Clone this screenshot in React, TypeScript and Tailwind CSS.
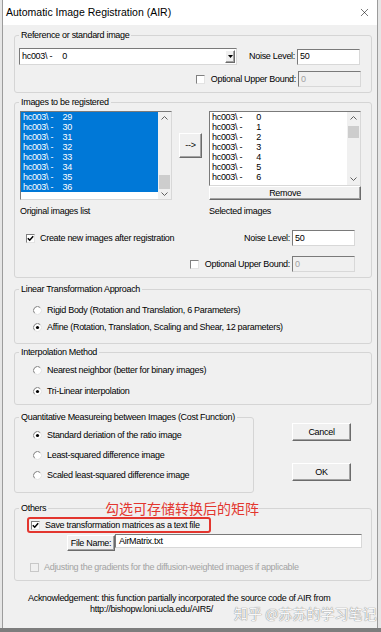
import { X } from 'lucide-react';
import type { ReactNode } from 'react';

const sunken =
  'border border-t-[#7a7a7a] border-l-[#7a7a7a] border-r-[#d8d8d8] border-b-[#d8d8d8]';
const raised =
  'border border-t-white border-l-white border-r-[#6b6b6b] border-b-[#6b6b6b] bg-[#f0f0f0] shadow-[inset_-1px_-1px_0_#a3a3a3]';

const leftItems = [29, 30, 31, 32, 33, 34, 35, 36];
const rightItems = [0, 1, 2, 3, 4, 5, 6];

function Group({
  label,
  className = '',
  children,
}: {
  label: string;
  className?: string;
  children: ReactNode;
}) {
  return (
    <div className={`rounded-[3px] border border-[#d5d5d5] ${className}`}>
      <div className="-mt-[6px] ml-[4px] w-fit bg-[#f0f0f0] px-[2px] leading-[11px]">
        {label}
      </div>
      {children}
    </div>
  );
}

function Item({ n, w = 'w-[49px]' }: { n: number; w?: string }) {
  return (
    <span className={`flex justify-between ${w}`}>
      <span>hc003\ -</span>
      <span>{n}</span>
    </span>
  );
}

function Check({ checked, disabled }: { checked?: boolean; disabled?: boolean }) {
  return (
    <span
      className={`flex h-[9px] w-[9px] shrink-0 items-center justify-center border ${
        disabled
          ? 'border-[#c8c8c8] bg-[#f0f0f0]'
          : 'border-t-[#808080] border-l-[#808080] border-r-[#e3e3e3] border-b-[#e3e3e3] bg-white'
      }`}
    >
      {checked && (
        <svg width="7" height="7" viewBox="0 0 7 7">
          <path d="M0.8 3.2 L2.7 5.2 L6.2 1.2" fill="none" stroke="#000" strokeWidth="1.5" />
        </svg>
      )}
    </span>
  );
}

function Radio({ checked }: { checked?: boolean }) {
  return (
    <svg width="9" height="9" viewBox="0 0 9 9" className="shrink-0">
      <circle cx="4.5" cy="4.5" r="4" fill="#fff" />
      <path d="M1.67 7.33 A4 4 0 0 1 7.33 1.67" stroke="#7f7f7f" fill="none" />
      <path d="M7.33 1.67 A4 4 0 0 1 1.67 7.33" stroke="#e2e2e2" fill="none" />
      {checked && <circle cx="4.5" cy="4.5" r="1.6" fill="#000" />}
    </svg>
  );
}

function RadioRow({
  label,
  checked,
  className = '',
}: {
  label: string;
  checked?: boolean;
  className?: string;
}) {
  return (
    <div className={`flex h-[14px] items-center gap-[5px] pl-[18px] ${className}`}>
      <Radio checked={checked} />
      <span>{label}</span>
    </div>
  );
}

function Chevron({ up }: { up?: boolean }) {
  return (
    <svg width="7" height="4" viewBox="0 0 7 4">
      <path
        d={up ? 'M0.5 3.5 L3.5 0.5 L6.5 3.5' : 'M0.5 0.5 L3.5 3.5 L6.5 0.5'}
        fill="none"
        stroke="#606060"
      />
    </svg>
  );
}

function Field({
  value,
  disabled,
  className = '',
}: {
  value: string;
  disabled?: boolean;
  className?: string;
}) {
  return (
    <div
      className={`flex h-[16px] w-[63px] items-center pl-[2px] ${sunken} ${
        disabled ? 'bg-[#f0f0f0] text-[#a0a0a0]' : 'bg-white'
      } ${className}`}
    >
      {value}
    </div>
  );
}

export default function App() {
  return (
    <div className="relative h-[632px] w-[381px] overflow-hidden bg-[#e6e6e6] font-['Liberation_Sans',Arial,sans-serif] text-[9px] leading-[11px] tracking-[-0.3px] text-black">
      <div className="ml-[2px] flex h-[628px] w-[376px] flex-col border-x border-[#9c9c9c] bg-[#f0f0f0]">
        <div className="flex h-[25px] shrink-0 items-center justify-between bg-white pl-[3px] pr-[6px]">
          <span className="text-[10.5px] tracking-normal">Automatic Image Registration (AIR)</span>
          <X size={13} strokeWidth={1} />
        </div>

        <div className="flex flex-col pl-[11px]">
          <Group label="Reference or standard image" className="mt-[10px] w-[358px] pb-[5px]">
            <div className="mt-[7px] flex h-[17px] items-center pr-[11px]">
              <div
                className={`ml-[4px] flex h-[17px] w-[218px] items-center justify-between bg-white pl-[2px] ${sunken}`}
              >
                <Item n={0} w="w-[45px]" />
                <span
                  className={`mr-[1px] flex h-[13px] w-[10px] items-center justify-center ${raised}`}
                >
                  <svg width="5" height="3" viewBox="0 0 5 3">
                    <path d="M0 0 H5 L2.5 3 Z" fill="#000" />
                  </svg>
                </span>
              </div>
              <span className="ml-auto">Noise Level:</span>
              <Field value="50" className="ml-[2px]" />
            </div>
            <div className="mt-[6px] flex items-center justify-end pr-[10px]">
              <Check />
              <span className="ml-[6px]">Optional Upper Bound:</span>
              <Field value="0" disabled className="ml-[2px]" />
            </div>
          </Group>

          <Group label="Images to be registered" className="mt-[9px] w-[358px] pb-[5px]">
            <div className="ml-[5px] mt-[3px] flex items-start">
              <div className={`flex h-[89px] w-[152px] bg-white ${sunken}`}>
                <div className="flex flex-1 flex-col">
                  {leftItems.map((n) => (
                    <div
                      key={n}
                      className="flex h-[10px] items-center bg-[#0078d7] pl-[2px] text-white"
                    >
                      <Item n={n} />
                    </div>
                  ))}
                </div>
                <div className="flex w-[13px] flex-col bg-[#f0f0f0]">
                  <div className="flex h-[12px] items-center justify-center">
                    <Chevron up />
                  </div>
                  <div className="flex flex-1 flex-col justify-end">
                    <div className="mx-auto h-[14px] w-[11px] bg-[#cdcdcd]" />
                  </div>
                  <div className="flex h-[10px] items-center justify-center">
                    <Chevron />
                  </div>
                </div>
              </div>

              <button className={`ml-[7px] mt-[22px] h-[25px] w-[23px] ${raised}`}>--&gt;</button>

              <div className="ml-[7px] flex w-[152px] flex-col">
                <div className={`flex h-[75px] bg-white ${sunken}`}>
                  <div className="flex flex-1 flex-col pl-[2px]">
                    {rightItems.map((n) => (
                      <div key={n} className="flex h-[10px] items-center">
                        <Item n={n} />
                      </div>
                    ))}
                  </div>
                  <div className="flex w-[13px] flex-col bg-[#f0f0f0]">
                    <div className="flex h-[12px] items-center justify-center">
                      <Chevron up />
                    </div>
                    <div className="flex-1 pt-[2px]">
                      <div className="mx-auto h-[12px] w-[11px] bg-[#cdcdcd]" />
                    </div>
                    <div className="flex h-[12px] items-center justify-center">
                      <Chevron />
                    </div>
                  </div>
                </div>
                <button className={`h-[14px] ${raised}`}>Remove</button>
              </div>
            </div>

            <div className="mt-[5px] flex leading-[12px]">
              <span className="ml-[5px] w-[189px]">Original images list</span>
              <span>Selected images</span>
            </div>

            <div className="mt-[13px] flex h-[16px] items-center pr-[16px]">
              <span className="ml-[11px]">
                <Check checked />
              </span>
              <span className="ml-[5px]">Create new images after registration</span>
              <span className="ml-auto">Noise Level:</span>
              <Field value="50" className="ml-[2px]" />
            </div>
            <div className="mt-[10px] flex items-center justify-end pr-[16px]">
              <Check />
              <span className="ml-[6px]">Optional Upper Bound:</span>
              <Field value="0" disabled className="ml-[2px]" />
            </div>
          </Group>

          <Group label="Linear Transformation Approach" className="mt-[11px] w-[358px] pb-[9px]">
            <RadioRow className="mt-[8px]" label="Rigid Body (Rotation and Translation, 6 Parameters)" />
            <RadioRow
              className="mt-[3px]"
              checked
              label="Affine (Rotation, Translation, Scaling and Shear, 12 parameters)"
            />
          </Group>

          <Group label="Interpolation Method" className="mt-[8px] w-[358px] pb-[6px]">
            <RadioRow className="mt-[5px]" label="Nearest neighbor (better for binary images)" />
            <RadioRow className="mt-[7px]" checked label="Tri-Linear interpolation" />
          </Group>

          <div className="mt-[12px] flex items-start">
            <Group
              label="Quantitative Measureing between Images (Cost Function)"
              className="w-[240px] pb-[10px]"
            >
              <RadioRow className="mt-[5px]" checked label="Standard deriation of the ratio image" />
              <RadioRow className="mt-[6px]" label="Least-squared difference image" />
              <RadioRow className="mt-[6px]" label="Scaled least-squared difference image" />
            </Group>
            <div className="ml-[38px] flex w-[59px] flex-col">
              <button className={`mt-[6px] h-[18px] ${raised}`}>Cancel</button>
              <button className={`mt-[22px] h-[18px] ${raised}`}>OK</button>
            </div>
          </div>

          <Group label="Others" className="relative mt-[15px] w-[358px] pb-[7px]">
            <span className="absolute left-[90px] top-[-10px] whitespace-nowrap bg-[#f0f0f0] font-['Noto_Sans_CJK_SC',sans-serif] text-[14px] leading-[18px] tracking-normal text-[#e3362f]">
              勾选可存储转换后的矩阵
            </span>
            <div className="ml-[12px] mt-[3px] flex h-[16px] w-[184px] items-center rounded-[3px] border-2 border-[#e3362f] pl-[2px]">
              <Check checked />
              <span className="ml-[5px]">Save transformation matrices as a text file</span>
            </div>
            <div className="mt-[1px] flex items-start pr-[9px]">
              <button className={`ml-[52px] mt-[1px] h-[16px] w-[48px] ${raised}`}>File Name:</button>
              <div className={`flex h-[14px] flex-1 items-center bg-white pl-[3px] ${sunken}`}>
                AirMatrix.txt
              </div>
            </div>
            <div className="mt-[10px] flex h-[12px] items-center pl-[15px] text-[#a3a3a3]">
              <Check disabled />
              <span className="ml-[5px]">
                Adjusting the gradients for the diffusion-weighted images if applicable
              </span>
            </div>
          </Group>

          <div className="mt-[12px] leading-[11px]">
            <div className="pl-[14px]">
              Acknowledgement: this function partially incorporated the source code of AIR from
            </div>
            <div className="pl-[76px]">http://bishopw.loni.ucla.edu/AIR5/</div>
          </div>
        </div>
      </div>
      <div className="h-[4px] bg-[#7d7d7d]" />

      <span className="absolute left-[234px] top-[604px] whitespace-nowrap font-['Noto_Sans_CJK_SC',sans-serif] text-[14px] leading-[18px] tracking-normal text-[#f8f8f8] [text-shadow:0_0_1px_#8a8a8a,0_0_1px_#8a8a8a]">
        知乎 @苏苏的学习笔记
      </span>
    </div>
  );
}
